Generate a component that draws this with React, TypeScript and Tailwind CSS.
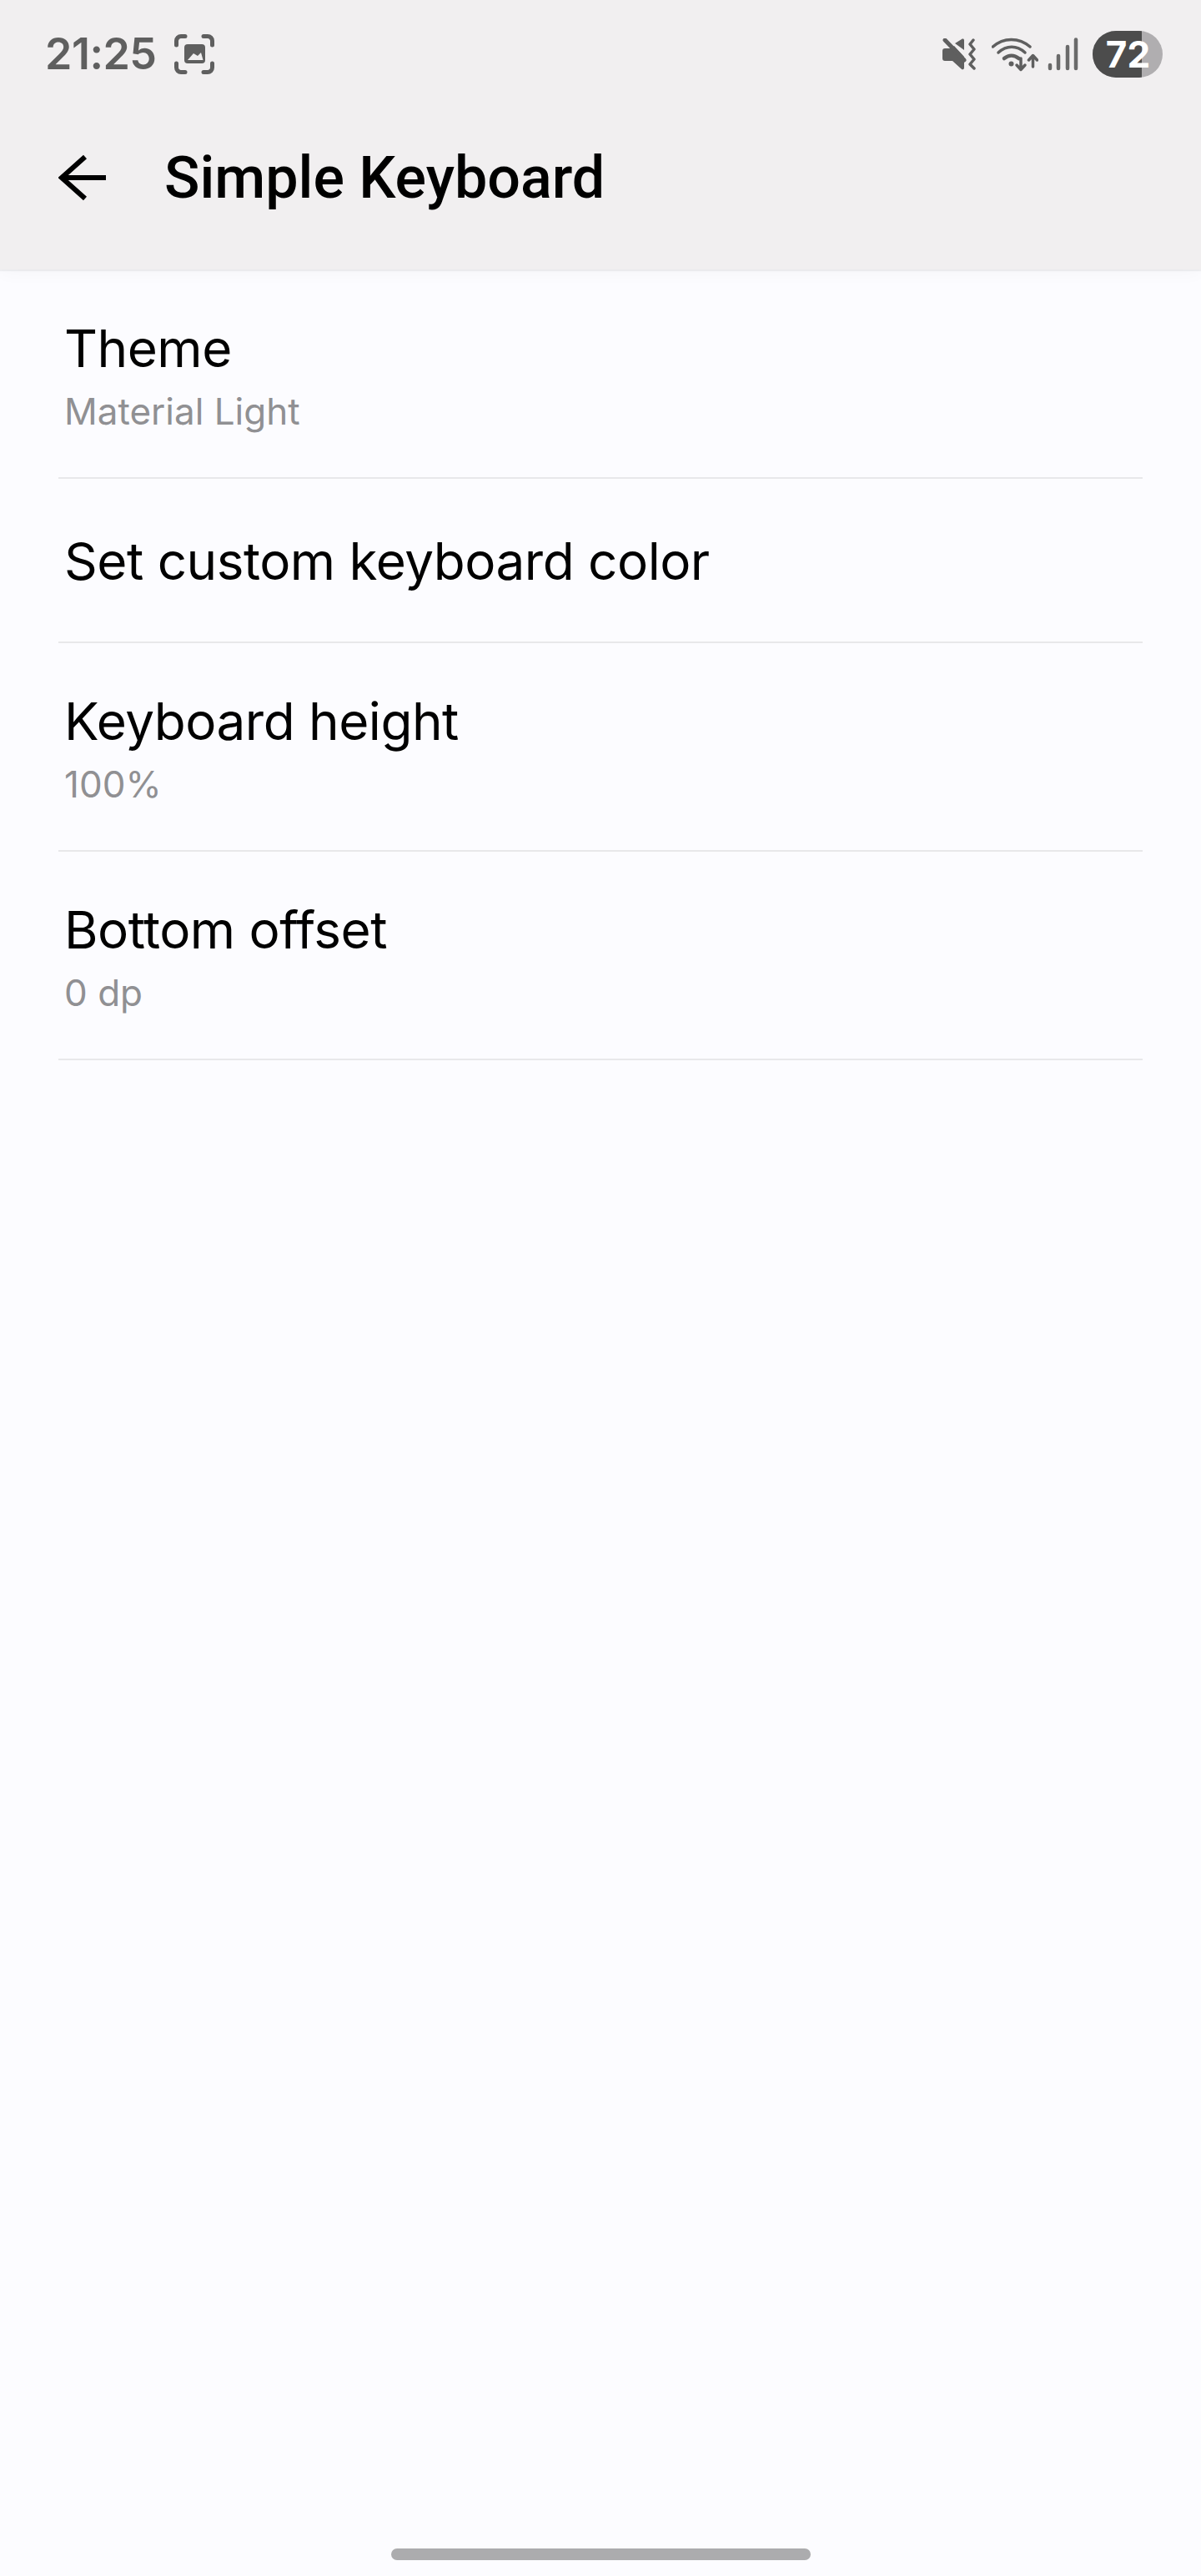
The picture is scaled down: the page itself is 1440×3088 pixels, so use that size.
function ScreenshotIcon() {
  return (
    <svg width="48" height="48" viewBox="0 0 48 48" fill="none">
      <path
        d="M13 2.5H8A5.5 5.5 0 0 0 2.5 8v5M35 2.5h5A5.5 5.5 0 0 1 45.500 8v5M13 45.500H8A5.500 5.500 0 0 1 2.500 40v-5M35 45.500h5a5.500 5.500 0 0 0 5.500-5.500v-5"
        stroke="#5f5f5f"
        strokeWidth="5"
        strokeLinecap="round"
      />
      <rect x="12" y="12" width="25" height="23" rx="4" fill="#5f5f5f" />
      <path d="M16 31l7-8 5 3 4-4 2.500 9z" fill="#f1eff0" />
    </svg>
  );
}

function MuteIcon() {
  return (
    <svg width="41" height="38" viewBox="0 0 41 38" fill="none">
      <path
        d="M3 12h7l4-3 12 13v13c0 2.500-2 3-3.500 1.500L12 27H3c-2 0-3-1-3-3v-9c0-2 1-3 3-3zM15 6l8-5c1.500-1 3-.5 3 1.500V14z"
        fill="#5f5f5f"
      />
      <path d="M3 2l23 24" stroke="#5f5f5f" strokeWidth="5" strokeLinecap="round" />
      <path
        d="M37 2l-4 5 5 6-5 6 5 6-5 6 5 5"
        stroke="#5f5f5f"
        strokeWidth="3.500"
        strokeLinecap="round"
        strokeLinejoin="round"
      />
    </svg>
  );
}

function WifiIcon() {
  return (
    <svg width="56" height="41" viewBox="0 0 56 41" fill="none" stroke="#5f5f5f" strokeLinecap="round">
      <path d="M1.500 11C14 -.500 33 -.500 46 11" strokeWidth="3.500" />
      <path d="M8 18C18 9 30 9 40 18" strokeWidth="3.500" />
      <path d="M15 25c5.500-4.500 12-4.500 17.500 0" strokeWidth="4.500" />
      <circle cx="23.500" cy="31.500" r="3" fill="#5f5f5f" stroke="none" />
      <path d="M35 25v13M30 33l5 5.500 5-5.500" strokeWidth="3.500" strokeLinejoin="round" />
      <path d="M49.500 22v13M44.500 27l5-5.500 5 5.500" strokeWidth="3.500" strokeLinejoin="round" />
    </svg>
  );
}

function SignalIcon() {
  return (
    <svg width="37" height="40" viewBox="0 0 37 40" fill="none" stroke="#6a6a6a" strokeWidth="4.500" strokeLinecap="round">
      <path d="M3 33v4" />
      <path d="M13 22v15" />
      <path d="M24 11v26" />
      <path d="M34 2.500V37" />
    </svg>
  );
}

function Battery() {
  return (
    <div className="relative ml-[17px] flex h-[56px] w-[84px] items-center justify-center overflow-hidden rounded-full bg-[#b0aeb0]">
      <div className="absolute inset-y-0 left-0 w-[59px] bg-[#4c4c4c]" />
      <span className="relative ml-[1px] text-[44px] leading-none font-bold text-white">72</span>
    </div>
  );
}

function BackArrow() {
  return (
    <svg width="57" height="56" viewBox="0 0 57 56" fill="none" stroke="#000" strokeWidth="6">
      <path d="M32 3L4 28l28 25" />
      <path d="M4 28h53" />
    </svg>
  );
}

type RowProps = {
  title: string;
  subtitle?: string;
};

function SettingRow({ title, subtitle }: RowProps) {
  return (
    <div
      className={
        subtitle
          ? "flex h-[250px] flex-col justify-center border-b-2 border-[#e8e8ea] pt-[4px] pl-[7px]"
          : "flex h-[197px] flex-col justify-center border-b-2 border-[#e8e8ea] pt-[2px] pl-[7px]"
      }
    >
      <div className="text-[62px] leading-[76px] tracking-[-0.5px] text-black">{title}</div>
      {subtitle && <div className="mt-[10px] text-[44px] leading-[54px] text-[#909093]">{subtitle}</div>}
    </div>
  );
}

export default function App() {
  return (
    <div className="flex h-[3088px] w-[1440px] flex-col bg-[#fcfcff] font-['Inter',sans-serif]">
      <header className="z-10 h-[323px] bg-[#f1eff0] shadow-[0_2px_1px_rgba(0,0,0,0.05),0_4px_20px_rgba(0,0,0,0.03)]">
        <div className="flex h-[130px] items-center justify-between pr-[46px] pl-[54px]">
          <div className="flex items-center">
            <span className="text-[52px] leading-none font-semibold tracking-[-0.5px] text-[#5f5f5f]">21:25</span>
            <div className="ml-[21px]">
              <ScreenshotIcon />
            </div>
          </div>
          <div className="flex items-center">
            <MuteIcon />
            <div className="ml-[18px]">
              <WifiIcon />
            </div>
            <div className="ml-[11px]">
              <SignalIcon />
            </div>
            <Battery />
          </div>
        </div>
        <div className="mt-[40px] flex items-center pl-[70px]">
          <BackArrow />
          <h1 className="ml-[70px] font-['Roboto',sans-serif] text-[70px] leading-[86px] font-medium text-black">
            Simple Keyboard
          </h1>
        </div>
      </header>

      <div className="mx-[70px] flex flex-col pt-[1px]">
        <SettingRow title="Theme" subtitle="Material Light" />
        <SettingRow title="Set custom keyboard color" />
        <SettingRow title="Keyboard height" subtitle="100%" />
        <SettingRow title="Bottom offset" subtitle="0 dp" />
      </div>

      <div className="mt-auto mb-[19px] flex justify-center">
        <div className="h-[14px] w-[503px] rounded-full bg-[#acacae]" />
      </div>
    </div>
  );
}
